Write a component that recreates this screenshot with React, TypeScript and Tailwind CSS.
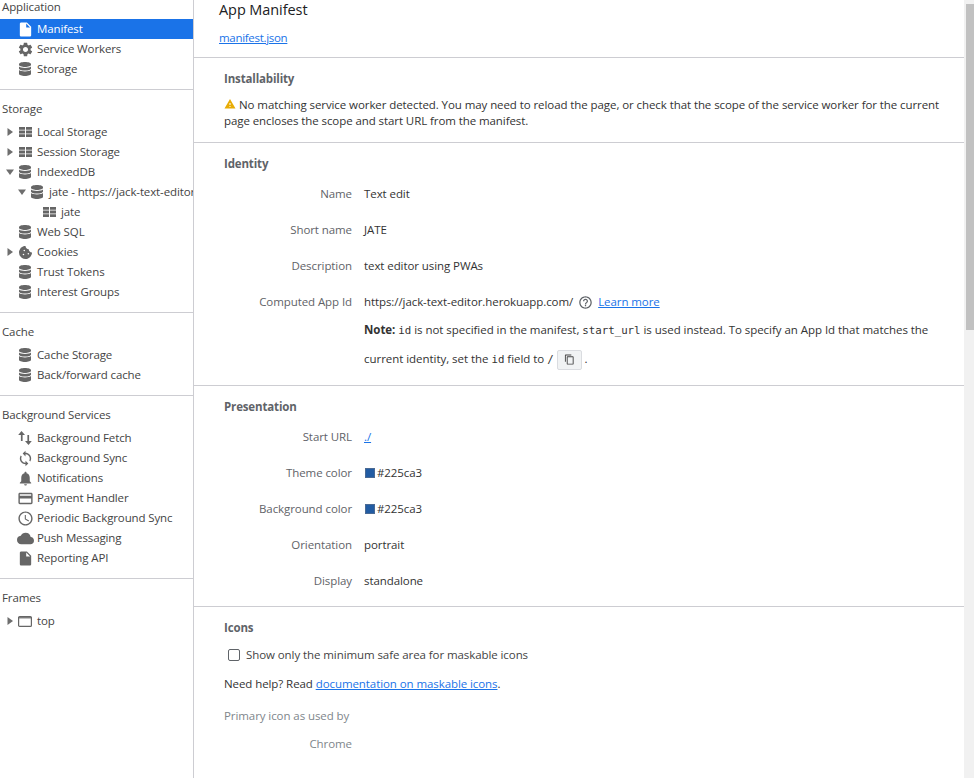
import React from 'react';
import { FaCookieBite } from 'react-icons/fa';
import {
  MdAccessTime,
  MdCloud,
  MdContentCopy,
  MdCreditCard,
  MdHelpOutline,
  MdInsertDriveFile,
  MdNotifications,
  MdSettings,
  MdSync,
  MdWarning,
} from 'react-icons/md';

type IconProps = { className?: string };

// stacked discs, like the devtools database glyph
const DbIcon = ({ className }: IconProps) => (
  <svg viewBox="0 0 12 14" className={className} fill="currentColor">
    <path d="M6 0c3.3 0 6 .9 6 2.2v.6C12 4.100 9.300 5 6 5S0 4.100 0 2.800v-.6C0 .9 2.700 0 6 0z" />
    <path d="M0 4.600C1.100 5.600 3.400 6 6 6s4.900-.4 6-1.400v1.800C12 7.600 9.300 8.500 6 8.500S0 7.600 0 6.400z" />
    <path d="M0 8.100C1.100 9.100 3.400 9.500 6 9.500s4.900-.4 6-1.400v3.700C12 13.100 9.300 14 6 14s-6-.9-6-2.200z" />
  </svg>
);

// devtools' 2x3 table glyph
const TableIcon = ({ className }: IconProps) => (
  <svg viewBox="0 0 13 10" className={className} fill="currentColor">
    <path d="M0 0h6v2.800H0zM7 0h6v2.800H7zM0 3.600h6v2.800H0zM7 3.600h6v2.800H7zM0 7.200h6V10H0zM7 7.200h6V10H7z" />
  </svg>
);

const FetchIcon = ({ className }: IconProps) => (
  <svg viewBox="0 0 14 14" className={className} fill="currentColor">
    <path d="M3.500 0 7 4H4.600v6H2.900V4H0.200zM9.400 4h1.700v6h2.700l-3.300 4-3.500-4h2.400z" />
  </svg>
);

const FrameIcon = ({ className }: IconProps) => (
  <svg viewBox="0 0 14 11" className={className} fill="none" stroke="currentColor">
    <rect x="0.600" y="0.600" width="12.800" height="9.800" rx="1" strokeWidth="1.200" />
    <path d="M0.600 1.800h12.800" strokeWidth="1.200" />
  </svg>
);

const Arrow = ({ open }: { open?: boolean }) => (
  <svg viewBox="0 0 8 8" className="h-2 w-2 text-[#6e6e6e]" fill="currentColor">
    {open ? <path d="M0 1.500h8L4 7z" /> : <path d="M1.500 0v8L7 4z" />}
  </svg>
);

const db = <DbIcon className="h-[14px] w-[12px] shrink-0" />;
const table = <TableIcon className="h-[10px] w-[13px] shrink-0" />;
const glyph = 'h-[17px] w-[17px] shrink-0';

type NavItem = {
  label: string;
  icon: React.ReactNode;
  arrow?: 'open' | 'closed';
  indent?: number;
  selected?: boolean;
};

const sections: { title: string; items: NavItem[] }[] = [
  {
    title: 'Application',
    items: [
      { label: 'Manifest', icon: <MdInsertDriveFile className={glyph} />, selected: true },
      { label: 'Service Workers', icon: <MdSettings className={glyph} /> },
      { label: 'Storage', icon: db },
    ],
  },
  {
    title: 'Storage',
    items: [
      { label: 'Local Storage', icon: table, arrow: 'closed' },
      { label: 'Session Storage', icon: table, arrow: 'closed' },
      { label: 'IndexedDB', icon: db, arrow: 'open' },
      { label: 'jate - https://jack-text-editor.herokuapp.com/', icon: db, arrow: 'open', indent: 1 },
      { label: 'jate', icon: table, indent: 2 },
      { label: 'Web SQL', icon: db },
      { label: 'Cookies', icon: <FaCookieBite className="h-[13px] w-[13px] shrink-0" />, arrow: 'closed' },
      { label: 'Trust Tokens', icon: db },
      { label: 'Interest Groups', icon: db },
    ],
  },
  {
    title: 'Cache',
    items: [
      { label: 'Cache Storage', icon: db },
      { label: 'Back/forward cache', icon: db },
    ],
  },
  {
    title: 'Background Services',
    items: [
      { label: 'Background Fetch', icon: <FetchIcon className="h-[14px] w-[14px] shrink-0" /> },
      { label: 'Background Sync', icon: <MdSync className={glyph} /> },
      { label: 'Notifications', icon: <MdNotifications className={glyph} /> },
      { label: 'Payment Handler', icon: <MdCreditCard className={glyph} /> },
      { label: 'Periodic Background Sync', icon: <MdAccessTime className={glyph} /> },
      { label: 'Push Messaging', icon: <MdCloud className={glyph} /> },
      { label: 'Reporting API', icon: <MdInsertDriveFile className={glyph} /> },
    ],
  },
  {
    title: 'Frames',
    items: [{ label: 'top', icon: <FrameIcon className="h-[11px] w-[14px] shrink-0" />, arrow: 'closed' }],
  },
];

const NavRow = ({ item }: { item: NavItem }) => (
  <div
    className={`flex h-5 items-center whitespace-nowrap ${
      item.selected ? 'bg-[#1a73e8] text-white' : 'text-[#444444]'
    } ${item.indent === 1 ? 'pl-[18px]' : item.indent === 2 ? 'pl-[42px]' : 'pl-[6px]'}`}
  >
    {item.indent !== 2 && (
      <span className="flex w-[12px] shrink-0 items-center">{item.arrow && <Arrow open={item.arrow === 'open'} />}</span>
    )}
    <span className={`mr-[5px] flex w-[14px] shrink-0 items-center justify-center ${item.selected ? 'text-white' : 'text-[#666666]'}`}>
      {item.icon}
    </span>
    <span>{item.label}</span>
  </div>
);

const Sidebar = () => (
  <aside className="h-[778px] w-[194px] shrink-0 overflow-hidden border-r border-[#cdcdd2] text-[11.5px] tracking-[-0.12px]">
    {sections.map((section, i) => (
      <section key={section.title} className={i > 0 ? 'border-t border-[#cdcdd2] pb-[10px]' : 'pb-[10px]'}>
        <div className={`pl-[2px] text-[#444444] ${i > 0 ? 'flex h-[32px] items-start pt-[10px]' : 'h-[19px] leading-[13px]'}`}>
          {section.title}
        </div>
        {section.items.map((item) => (
          <NavRow key={item.label} item={item} />
        ))}
      </section>
    ))}
  </aside>
);

const Link = ({ children }: { children: React.ReactNode }) => (
  <a className="text-[#1a73e8] underline">{children}</a>
);

const Code = ({ children }: { children: React.ReactNode }) => (
  <code className="font-['DejaVu_Sans_Mono',monospace] text-[10.75px] leading-none tracking-normal text-[#333333]">{children}</code>
);

const Field = ({ label, children }: { label: string; children: React.ReactNode }) => (
  <div className="flex h-9 items-center">
    <div className="w-[128px] shrink-0 text-right text-[#5f6368]">{label}</div>
    <div className="ml-[12px] flex items-center text-[#333333]">{children}</div>
  </div>
);

const SectionTitle = ({ children }: { children: React.ReactNode }) => (
  <h2 className="font-bold leading-4 tracking-[-0.15px] text-[#5f6368]">{children}</h2>
);

const Swatch = () => (
  <span className="ml-[1px] mr-[2px] h-[10px] w-[10px] border border-[#4a6a94] bg-[#225ca3]" />
);

const Main = () => (
  <main className="min-w-0 flex-1 overflow-hidden tracking-[-0.08px] text-[#333333]">
    <div className="h-[58px] border-b border-[#cdcdd2] pl-[25px]">
      <h1 className="text-[14.5px] leading-[20px] text-[#202124]">App Manifest</h1>
      <div className="mt-[9px] leading-[18px] tracking-[-0.3px]">
        <Link>manifest.json</Link>
      </div>
    </div>

    <section className="h-[85px] border-b border-[#cdcdd2] pl-[30px] pt-[13px]">
      <SectionTitle>Installability</SectionTitle>
      <p className="mt-[10px] pr-[20px] leading-4">
        <MdWarning className="mr-[3px] inline h-[12px] w-[12px] align-[-1px] text-[#e8ac05]" />
        No matching service worker detected. You may need to reload the page, or check that the scope of the service worker for the current page encloses the scope and start URL from the manifest.
      </p>
    </section>

    <section className="h-[243px] border-b border-[#cdcdd2] pl-[30px] pt-[13px]">
      <SectionTitle>Identity</SectionTitle>
      <div className="mt-[4px]">
        <Field label="Name">Text edit</Field>
        <Field label="Short name">JATE</Field>
        <Field label="Description">text editor using PWAs</Field>
        <Field label="Computed App Id">
          https://jack-text-editor.herokuapp.com/
          <MdHelpOutline className="mx-[5px] h-[15px] w-[15px] text-[#5f6368]" />
          <Link>Learn more</Link>
        </Field>
        <div className="-mt-[5px] ml-[140px] pr-[30px] leading-[29px] tracking-[-0.04px]">
          <strong className="text-[#333333]">Note:</strong> <Code>id</Code> is not specified in the manifest, <Code>start_url</Code> is used instead. To specify an App Id that matches the current identity, set the <Code>id</Code> field to <Code>/</Code>{' '}
          <span className="-my-1 mr-[3px] inline-flex h-5 w-[25px] items-center justify-center rounded-[2px] border border-[#dadce0] bg-[#f1f3f4] align-middle">
            <MdContentCopy className="h-[11px] w-[11px] text-[#444444]" />
          </span>
          .
        </div>
      </div>
    </section>

    <section className="h-[221px] border-b border-[#cdcdd2] pl-[30px] pt-[13px]">
      <SectionTitle>Presentation</SectionTitle>
      <div className="mt-[4px]">
        <Field label="Start URL"><Link>./</Link></Field>
        <Field label="Theme color"><Swatch />#225ca3</Field>
        <Field label="Background color"><Swatch />#225ca3</Field>
        <Field label="Orientation">portrait</Field>
        <Field label="Display">standalone</Field>
      </div>
    </section>

    <section className="pl-[30px] pt-[13px]">
      <SectionTitle>Icons</SectionTitle>
      <label className="mt-[11px] flex h-4 items-center pl-[4px] text-[#444444]">
        <input type="checkbox" className="mr-[6px] h-[12px] w-[12px] appearance-none rounded-[2px] border border-[#5f6368] bg-white" />
        Show only the minimum safe area for maskable icons
      </label>
      <p className="mt-[13px] leading-4">
        Need help? Read <Link>documentation on maskable icons</Link>.
      </p>
      <div className="mt-[16px] leading-4 text-[#80868b]">Primary icon as used by</div>
      <div className="mt-[12px] w-[128px] text-right leading-4 text-[#80868b]">Chrome</div>
    </section>
  </main>
);

export default function App() {
  return (
    <div className="flex h-[778px] w-[974px] overflow-hidden bg-white font-['Open_Sans',sans-serif] text-[11.5px]">
      <Sidebar />
      <Main />
      {/* page scrollbar */}
      <div className="w-[10px] shrink-0 bg-[#f1f1f1] pl-[2px] pt-[4px]">
        <div className="h-[326px] bg-[#c1c1c1]" />
      </div>
    </div>
  );
}
